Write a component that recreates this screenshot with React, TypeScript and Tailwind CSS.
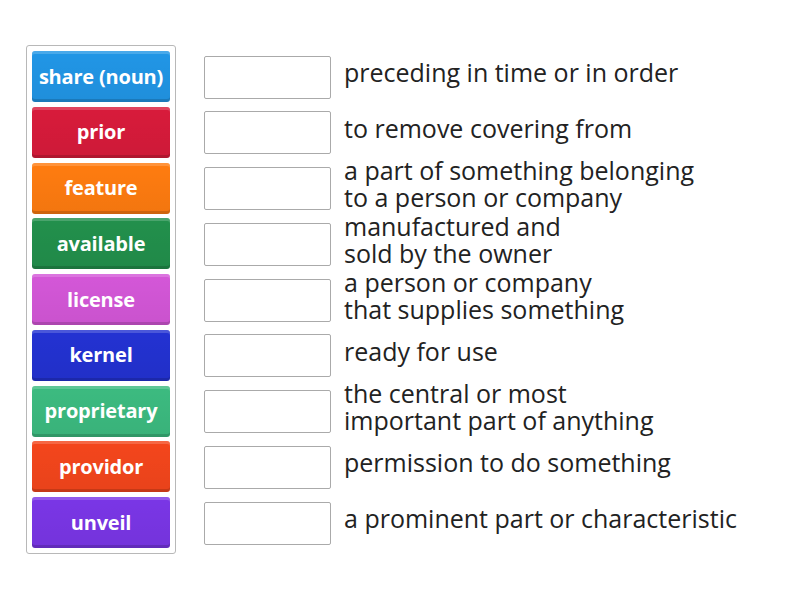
const items = [
    { word: "share (noun)", color: "bg-[#2196e6]", def: ["preceding in time or in order"] },
    { word: "prior", color: "bg-[#d81b3b]", def: ["to remove covering from"] },
    { word: "feature", color: "bg-[#ff7c10]", def: ["a part of something belonging", "to a person or company"] },
    { word: "available", color: "bg-[#22904c]", def: ["manufactured and", "sold by the owner"] },
    { word: "license", color: "bg-[#d457d8]", def: ["a person or company", "that supplies something"] },
    { word: "kernel", color: "bg-[#2332d2]", def: ["ready for use"] },
    { word: "proprietary", color: "bg-[#3cbb80]", def: ["the central or most", "important part of anything"] },
    { word: "providor", color: "bg-[#f4461c]", def: ["permission to do something"] },
    { word: "unveil", color: "bg-[#7a36e6]", def: ["a prominent part or characteristic"] },
]

export default function App() {
    return (
        <div className="w-[800px] h-[600px] bg-white flex items-start pt-[45px] pl-[26px] font-['Open_Sans',sans-serif]">
            <div className="flex flex-col gap-[4.75px] p-[5px] w-[150px] border border-[#b8b8b8] rounded-[3px]">
                {items.map((it) => (
                    <div
                        key={it.word}
                        className={`${it.color} h-[51px] rounded-[3px] flex items-center justify-center text-white text-[20px] font-bold tracking-[-0.2px] shadow-[inset_0_3px_0_rgba(255,255,255,0.18),inset_0_-3px_0_rgba(0,0,0,0.15)] bg-linear-to-b from-white/0 to-black/5`}
                    >
                        {it.word}
                    </div>
                ))}
            </div>

            <div className="flex flex-col gap-[4.75px] pt-[6px] ml-[28px]">
                {items.map((it) => (
                    <div key={it.word} className="h-[51px] flex items-center gap-[13px]">
                        <div className="w-[127px] h-[43px] border border-[#aaaaaa] rounded-[2px] bg-white shrink-0 mt-[1px]" />
                        <div className="text-[25px] leading-[27px] text-[#222] -mt-[8px]">
                            {it.def.map((l) => <div key={l}>{l}</div>)}
                        </div>
                    </div>
                ))}
            </div>
        </div>
    )
}
